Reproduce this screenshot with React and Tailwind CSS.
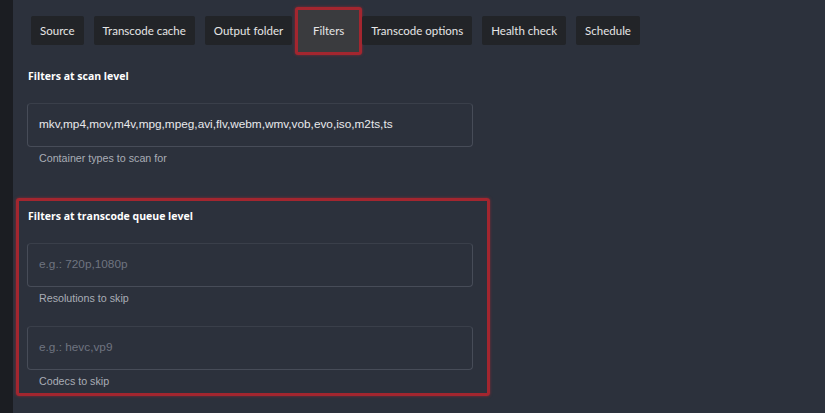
import React from 'react';

const tabs = ['Source', 'Transcode cache', 'Output folder', 'Filters', 'Transcode options', 'Health check', 'Schedule'];

const Field = ({ value, placeholder, helper }) => (
    <div className="w-[446px]">
        <div className="h-[44px] rounded-[4px] border border-[#474c58] border-t-[#3a3f4a] flex items-center px-[11px]">
            {value ? (
                <span className="text-[11.8px] text-[#e8e9ec] font-['Liberation_Sans',Arial,sans-serif]">{value}</span>
            ) : (
                <span className="text-[11.8px] text-[#6f7480] font-['Liberation_Sans',Arial,sans-serif]">{placeholder}</span>
            )}
        </div>
        <p className="pl-[12px] pt-[3px] text-[10.7px] text-[#a9adb6] font-['Liberation_Sans',Arial,sans-serif]">{helper}</p>
    </div>
);

const App = () => {
    return (
        <div className="w-[825px] h-[413px] flex bg-[#2c313c] overflow-hidden font-['Lato',sans-serif]">
            {/* dark sidebar strip */}
            <div className="w-[13px] h-full bg-[#1b1d22] shrink-0" />

            <div className="flex-1 flex flex-col">
                {/* TABS */}
                <div className="flex items-center gap-[10px] pl-[18px] pt-[16px]">
                    {tabs.map(t => t === 'Filters' ? (
                        <div key={t} className="w-[67px] h-[48px] -my-[10px] -ml-[7px] -mr-[10px] rounded-[3px] border-[3px] border-[#a3262f] bg-[#3a3b3e] shadow-[0_0_3px_rgba(190,40,50,0.6)] flex items-center justify-center text-[11.5px] text-[#e6e6e6]">
                            {t}
                        </div>
                    ) : (
                        <div key={t} className="h-[29px] px-[9px] flex items-center bg-[#222428] rounded-[2px] text-[11.5px] text-[#e6e6e6]">{t}</div>
                    ))}
                </div>

                {/* SCAN LEVEL */}
                <div className="pl-[15px] pt-[26px]">
                    <h3 className="text-[10.5px] font-bold text-white leading-none font-['Open_Sans',sans-serif]">Filters at scan level</h3>
                    <div className="mt-[21px] -ml-[1px]">
                        <Field value="mkv,mp4,mov,m4v,mpg,mpeg,avi,flv,webm,wmv,vob,evo,iso,m2ts,ts" helper="Container types to scan for" />
                    </div>
                </div>

                {/* TRANSCODE QUEUE LEVEL */}
                <div className="ml-[3px] mt-[32px] w-[474px] h-[198px] rounded-[3px] border-[3px] border-[#a3262f] shadow-[0_0_3px_rgba(190,40,50,0.6)] pl-[9px] pt-[10px]">
                    <h3 className="text-[10.5px] font-bold text-white leading-none font-['Open_Sans',sans-serif]">Filters at transcode queue level</h3>
                    <div className="mt-[22px] -ml-[1px] flex flex-col gap-[20px]">
                        <Field placeholder="e.g.: 720p,1080p" helper="Resolutions to skip" />
                        <Field placeholder="e.g.: hevc,vp9" helper="Codecs to skip" />
                    </div>
                </div>
            </div>
        </div>
    );
};

export default App;
